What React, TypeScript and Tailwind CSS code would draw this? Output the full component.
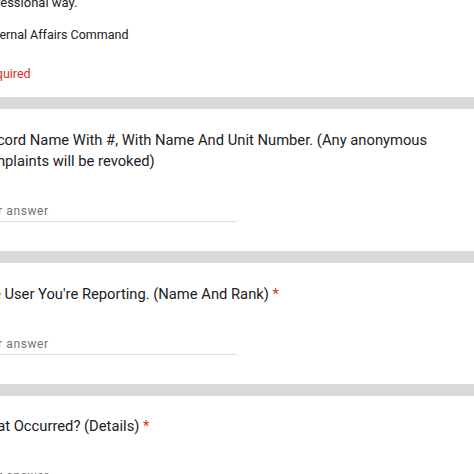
import React from 'react';

const font = { fontFamily: 'Roboto, "Noto Sans", Arial, sans-serif' };

function AnswerField() {
  return (
    <div className="mt-[31px] w-[261px] border-b border-[#e0e0e0] pb-[2px]">
      <p className="text-[12px] leading-[16px] tracking-[0.6px] text-[#70757a]">Your answer</p>
    </div>
  );
}

function Question({ lines, required }: { lines: string[]; required?: boolean }) {
  return (
    <div className="text-[14.75px] leading-[21px] text-[#202124]">
      {lines.map((l, i) => (
        <p key={i} className="whitespace-nowrap">
          {l}
          {required && i === lines.length - 1 && <span className="text-[#d93025]"> *</span>}
        </p>
      ))}
    </div>
  );
}

export default function App() {
  return (
    <div className="w-[474px] h-[474px] overflow-hidden bg-[#dadada]" style={font}>
      <div className="-ml-[24px] w-[540px] flex flex-col gap-[12px]">
        {/* header card */}
        <div className="bg-white -mt-[7px] pb-[13px] text-[13px] leading-[20px] text-[#202124]">
          <p>Professional way.</p>
          <p className="mt-[12px] pl-[9px] text-[12.5px]">Internal Affairs Command</p>
          <p className="mt-[19px] -ml-[3px] text-[#d93025] text-[12.5px]">* Required</p>
        </div>

        <div className="bg-white pt-[21px] pb-[29px]">
          <Question lines={['Discord Name With #, With Name And Unit Number. (Any anonymous', 'complaints will be revoked)']} />
          <AnswerField />
        </div>

        <div className="bg-white pt-[21px] pb-[29px]">
          <Question lines={["The User You're Reporting. (Name And Rank)"]} required />
          <AnswerField />
        </div>

        <div className="bg-white pt-[20px] pb-[40px]">
          <Question lines={['What Occurred? (Details)']} required />
          <AnswerField />
        </div>
      </div>
    </div>
  );
}
